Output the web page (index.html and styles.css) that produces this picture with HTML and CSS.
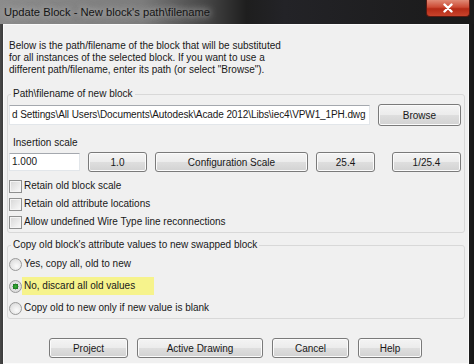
FILE: index.html
```html
<!DOCTYPE html>
<html>
<head>
    <meta charset="utf-8">
    <title>Update Block</title>
    <link rel="stylesheet" href="styles.css">
</head>
<body>
<div class="window">
    <div class="titlebar">
        <span class="title">Update Block - New block's path\filename</span>
        <span class="close">
            <svg width="14" height="10" viewBox="0 0 14 10"><path d="M3.5 1.5 L10.5 8.5 M10.5 1.5 L3.5 8.5" stroke="#fff" stroke-width="2.4" stroke-linecap="round"/></svg>
        </span>
    </div>
    <div class="client">
        <p class="intro">Below is the path/filename of the block that will be substituted<br>for all instances of the selected block. If you want to use a<br>different path/filename, enter its path (or select "Browse").</p>

        <fieldset class="group group-path">
            <legend>Path\filename of new block</legend>
            <div class="path-row">
                <div class="field field-path">d Settings\All Users\Documents\Autodesk\Acade 2012\Libs\iec4\VPW1_1PH.dwg</div>
                <button class="btn btn-browse">Browse</button>
            </div>
            <div class="label">Insertion scale</div>
            <div class="scale-row">
                <div class="field field-scale">1.000</div>
                <button class="btn btn-one">1.0</button>
                <button class="btn btn-config">Configuration Scale</button>
                <button class="btn btn-mm">25.4</button>
                <button class="btn btn-inch">1/25.4</button>
            </div>
            <div class="check"><span class="box"></span>Retain old block scale</div>
            <div class="check"><span class="box"></span>Retain old attribute locations</div>
            <div class="check"><span class="box"></span>Allow undefined Wire Type line reconnections</div>
        </fieldset><!-- group-path -->

        <fieldset class="group group-copy">
            <legend>Copy old block's attribute values to new swapped block</legend>
            <div class="radio"><span class="dot"></span>Yes, copy all, old to new</div>
            <div class="radio radio-on"><span class="dot"></span><span class="mark">No, discard all old values</span></div>
            <div class="radio"><span class="dot"></span>Copy old to new only if new value is blank</div>
        </fieldset><!-- group-copy -->

        <div class="actions">
            <button class="btn btn-project">Project</button>
            <button class="btn btn-drawing">Active Drawing</button>
            <button class="btn btn-cancel">Cancel</button>
            <button class="btn btn-help">Help</button>
        </div>
    </div><!-- client -->
</div><!-- window -->
</body>
</html>
```

FILE: styles.css
```css
body {
    margin: 0;
    padding: 0;
    background: #2a2a2a;
    font-family: "Liberation Sans", Arial, sans-serif;
    font-size: 10px;
    line-height: 12px;
    color: #181818;
}

.window {
    width: 474px;
    height: 364px;
    overflow: hidden;
    background: linear-gradient(to right, #4a4a4a 0, #3a3a3a 3px, #1c1c1c 470px, #161616 100%);
}

.titlebar {
    height: 24px;
    display: flex;
    align-items: flex-start;
    background: linear-gradient(to right, #8c8c8c 0, #7c7c7c 30%, #444 44%, #1e1e1e 52%, #232327 60%, #1a1a1a 100%);
}

.title {
    padding: 6px 0 0 4px;
    font-size: 11.2px;
    line-height: 13px;
    color: #141414;
    text-shadow: 0 0 6px #b8b8b8, 0 0 10px #aaa;
}

.close {
    margin-left: auto;
    margin-right: 4px;
    width: 44px;
    height: 17px;
    display: flex;
    align-items: center;
    justify-content: center;
    border: 1px solid #5a1a12;
    border-top: 0;
    border-radius: 0 0 4px 4px;
    box-sizing: border-box;
    background: linear-gradient(#e08a76 0, #cc4a34 45%, #b42a16 55%, #c8442c 100%);
}

.client {
    margin: 0 5px 0 3px;
    height: 340px;
    box-sizing: border-box;
    padding-top: 15px;
    border: 1px solid #fbfbfb;
    background: #f0f0f0;
}

.intro {
    margin: 0 0 12px 0;
    padding-left: 5px;
}

.group {
    margin: 0 3px;
    padding: 4px 3px 1px 1px;
    min-width: 0;
    border: 1px solid #d8d8d8;
    border-radius: 3px;
}

.group legend {
    margin-left: 2px;
    padding: 0 2px;
    line-height: 12px;
}

.group-copy {
    margin-top: 6px;
    padding: 3px 3px 0 1px;
}

.path-row {
    height: 22px;
    display: flex;
    align-items: center;
}

.field {
    box-sizing: border-box;
    background: #fff;
    border: 1px solid #e2e6ea;
    border-top-color: #a4a8ae;
    padding: 0 2px;
    white-space: nowrap;
    overflow: hidden;
    display: flex;
    align-items: center;
}

.field-path {
    width: 361px;
    height: 20px;
    letter-spacing: -0.1px;
}

.field-scale {
    width: 71px;
    height: 18px;
}

.btn {
    box-sizing: border-box;
    height: 20px;
    margin: 0;
    padding: 0;
    border: 1px solid #7a7a7a;
    border-radius: 3px;
    background: linear-gradient(#f4f4f4 0, #ececec 48%, #dedede 52%, #d2d2d2 100%);
    box-shadow: inset 0 0 0 1px #fbfbfb;
    font-family: "Liberation Sans", Arial, sans-serif;
    font-size: 10px;
    color: #181818;
}

.btn-browse {
    margin-left: 8px;
    width: 83px;
    height: 22px;
}

.label {
    margin-top: 11px;
    padding-left: 4px;
}

.scale-row {
    margin-top: 3px;
    height: 20px;
    display: flex;
    align-items: center;
}

.btn-one {
    margin-left: 8px;
    width: 59px;
}

.btn-config {
    margin-left: 8px;
    width: 153px;
}

.btn-mm {
    margin-left: 8px;
    width: 59px;
}

.btn-inch {
    margin-left: 17px;
    width: 69px;
}

.check {
    height: 18px;
    display: flex;
    align-items: center;
}

.scale-row + .check {
    margin-top: 5px;
}

.box {
    width: 13px;
    height: 13px;
    box-sizing: border-box;
    margin-right: 2px;
    border: 1px solid #8e8f8f;
    background: linear-gradient(135deg, #d6d6d6 0, #e8e8e8 50%, #fafafa 100%);
    box-shadow: inset 0 0 0 1px #f4f4f4;
}

.radio {
    height: 20px;
    margin-bottom: 2px;
    display: flex;
    align-items: center;
}

.radio:last-child {
    margin-bottom: 0;
}

.dot {
    width: 13px;
    height: 13px;
    box-sizing: border-box;
    border-radius: 50%;
    border: 1px solid #999;
    background: radial-gradient(circle at 60% 65%, #fbfbfb 0, #e6e6e6 55%, #cfcfcf 100%);
}

.radio > .dot {
    margin-right: 2px;
}

.radio-on .dot {
    margin-right: 0;
    background: radial-gradient(circle at 50% 50%, #3fae3c 0, #1f8a22 28%, #1a5e1e 36%, #e4e4e4 40%, #d2d2d2 100%);
}

.mark {
    padding: 3px 19px 3px 2px;
    background: #f6f38c;
}

.actions {
    margin-top: 19px;
    padding-left: 45px;
    display: flex;
    gap: 9px;
}

.btn-project {
    width: 79px;
}

.btn-drawing {
    width: 126px;
}

.btn-cancel {
    width: 77px;
}

.btn-help {
    width: 64px;
}
```
